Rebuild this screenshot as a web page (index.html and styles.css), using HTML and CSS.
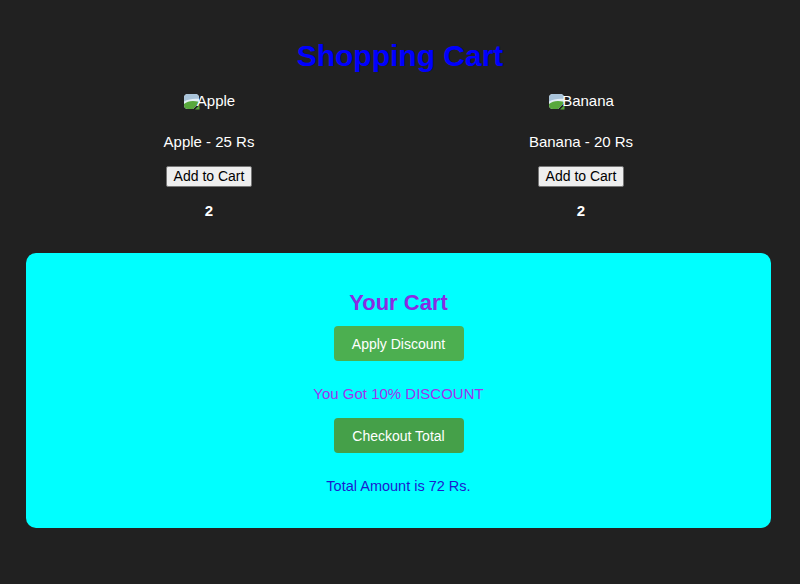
FILE: index.html
```html
<!DOCTYPE html>
<html>
<head>
<meta charset="utf-8">
<link rel="stylesheet" href="styles.css">
</head>
<body>
<h1 class="title">Shopping Cart</h1>
<div class="products">
  <div class="product">
    <div class="img-alt"><svg class="broken" width="17" height="17" viewBox="0 0 17 17"><defs><clipPath id="c1"><path d="M1 5a4 4 0 0 1 4-4h7a4 4 0 0 1 4 4v5l-6 6H5a4 4 0 0 1-4-4z"/></clipPath></defs><g clip-path="url(#c1)"><rect x="0" y="0" width="17" height="17" fill="#e4eef6"/><path d="M0 0h17v6C11 5 5 6 0 9z" fill="#a9c4da"/><path d="M0 12c4-4 9-5 17-3v8H0z" fill="#58a83c"/></g><path d="M12 16.5l4.5-4.5v4.5z" fill="#58a83c"/></svg><span>Apple</span></div>
    <p class="price">Apple - 25 Rs</p>
    <button class="add">Add to Cart</button>
    <p class="count">2</p>
  </div>
  <div class="product">
    <div class="img-alt"><svg class="broken" width="17" height="17" viewBox="0 0 17 17"><defs><clipPath id="c2"><path d="M1 5a4 4 0 0 1 4-4h7a4 4 0 0 1 4 4v5l-6 6H5a4 4 0 0 1-4-4z"/></clipPath></defs><g clip-path="url(#c2)"><rect x="0" y="0" width="17" height="17" fill="#e4eef6"/><path d="M0 0h17v6C11 5 5 6 0 9z" fill="#a9c4da"/><path d="M0 12c4-4 9-5 17-3v8H0z" fill="#58a83c"/></g><path d="M12 16.5l4.5-4.5v4.5z" fill="#58a83c"/></svg><span>Banana</span></div>
    <p class="price">Banana - 20 Rs</p>
    <button class="add">Add to Cart</button>
    <p class="count">2</p>
  </div>
</div>
<div class="cart">
  <h2 class="cart-title">Your Cart</h2>
  <button class="green">Apply Discount</button>
  <p class="discount">You Got 10% DISCOUNT</p>
  <button class="green dark">Checkout Total</button>
  <p class="total">Total Amount is 72 Rs.</p>
</div>
</body>
</html>
```
FILE: styles.css
```css
html, body {
  margin: 0;
  padding: 0;
  background: #212121;
  font-family: "Liberation Sans", Arial, sans-serif;
  color: #ffffff;
}
body {
  padding-top: 37px;
}
.title {
  margin: 0;
  text-align: center;
  color: #0000ff;
  font-size: 30px;
  line-height: 37px;
  font-weight: bold;
}
.products {
  display: grid;
  grid-template-columns: 372px 372px;
  justify-content: center;
  padding-right: 10px;
  margin-top: 18px;
}
.product {
  display: flex;
  flex-direction: column;
  align-items: center;
}
.img-alt {
  display: flex;
  align-items: center;
  height: 18px;
  font-size: 15px;
  line-height: 18px;
}
.broken {
  display: block;
  margin-right: -3px;
}
.price {
  margin: 23px 0 0;
  font-size: 15px;
  line-height: 18px;
}
.add {
  margin-top: 15px;
  font-family: "Liberation Sans", Arial, sans-serif;
  font-size: 14px;
  line-height: 17px;
  height: 21px;
  padding: 1px 7px;
  background: #efefef;
  color: #000;
  border: 1px solid #767676;
  border-radius: 2px;
}
.count {
  margin: 15px 0 0;
  font-size: 15px;
  font-weight: bold;
  line-height: 18px;
}
.cart {
  margin: 33px 29px 0 26px;
  background: #00ffff;
  border-radius: 10px;
  padding: 36px 0 33px;
  display: flex;
  flex-direction: column;
  align-items: center;
}
.cart-title {
  margin: 0;
  color: #8a2be2;
  font-size: 22px;
  line-height: 28px;
  font-weight: bold;
}
.green {
  margin-top: 9px;
  width: 130px;
  height: 35px;
  background: #4caf50;
  color: #ffffff;
  border: none;
  border-radius: 4px;
  font-family: "Liberation Sans", Arial, sans-serif;
  font-size: 14px;
  padding: 0;
}
.green.dark {
  background: #45a049;
  margin-top: 15px;
}
.discount {
  margin: 24px 0 0;
  color: #a033ee;
  font-size: 15px;
  line-height: 18px;
}
.total {
  margin: 24px 0 0;
  color: #1c1ccf;
  font-size: 14.5px;
  line-height: 18px;
}
```
